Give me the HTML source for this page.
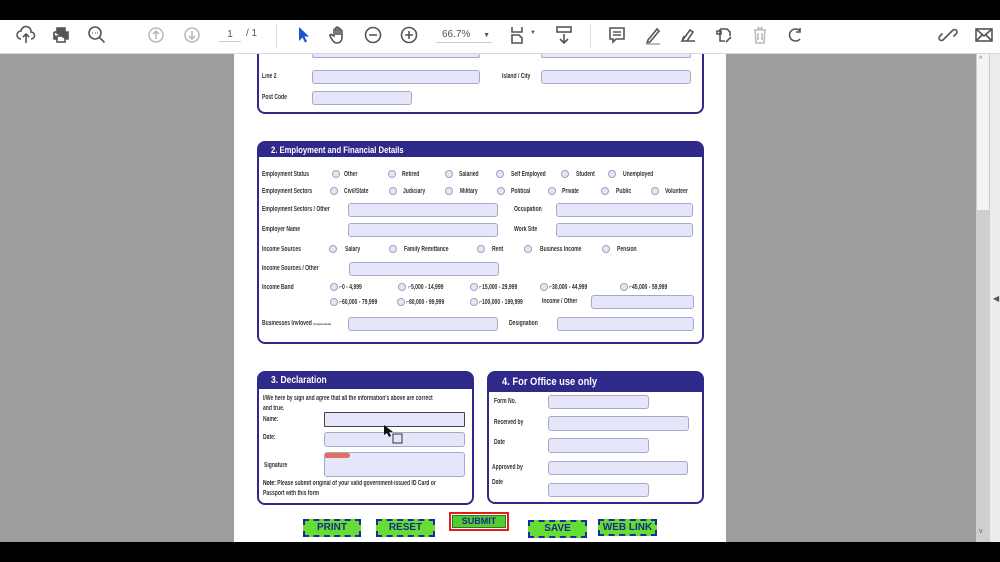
<!DOCTYPE html>
<html><head><meta charset="utf-8"><style>
*{margin:0;padding:0;box-sizing:border-box}
body{width:1000px;height:562px;overflow:hidden;background:#000;position:relative;font-family:"Liberation Sans",sans-serif}
.a{position:absolute}
#tb{left:0;top:20px;width:1000px;height:34px;background:#fff;border-bottom:1px solid #d8d8d8;z-index:9}
.tt{z-index:10}
#gray{left:0;top:54px;width:976px;height:488px;background:#9d9d9d}
#page{left:234px;top:54px;width:492px;height:488px;background:#fff}
#sb{left:976px;top:54px;width:14px;height:488px;background:#cfcfcf}
#rp{left:990px;top:54px;width:10px;height:488px;background:#ececec}
.box{position:absolute;border:2px solid #2f2a8a;border-radius:8px;background:#fff}
.hd{position:absolute;left:0;top:0;right:0;background:#2f2a8a;color:#fff;font-weight:bold;border-radius:5px 5px 0 0}
.hd span{display:inline-block;transform:scaleX(.85);transform-origin:left}
.l{position:absolute;font-size:7px;font-weight:bold;color:#333;white-space:nowrap;line-height:8px;transform:scaleX(.72);transform-origin:left}
.f{position:absolute;background:#e6e6fa;border:1px solid #a8a8c8;border-radius:3px}
.r{position:absolute;width:8px;height:8px;border-radius:50%;background:#e6e6f4;border:1px solid #a0a0c0}
.btn{position:absolute;background:#66dd33;border:2px dashed #1a2aa0;color:#1a2a8a;font-weight:bold;font-size:10px;text-align:center;line-height:13px}
svg.i{position:absolute;top:25px;width:20px;height:20px;fill:none;stroke:#555;stroke-width:1.6;z-index:10}
</style></head><body>
<div class="a" id="tb"></div>
<svg class="i" style="left:16px" viewBox="0 0 20 20"><path d="M5 14a4 4 0 0 1 0-8 5 5 0 0 1 10 1 3.5 3.5 0 0 1 0 7M10 18V9M7 12l3-3 3 3"/></svg>
<svg class="i" style="left:51px" viewBox="0 0 20 20"><path d="M6 7V3h8v4M3 7h14v7h-3M6 14H3V7" fill="#555"/><rect x="6" y="11" width="8" height="6"/></svg>
<svg class="i" style="left:87px" viewBox="0 0 20 20"><circle cx="8" cy="8" r="6"/><path d="M12.5 12.5l5 5"/><path d="M5.5 8h.5M8 8h.5M10.5 8h.5" stroke-width="2"/></svg>
<svg class="i" style="left:146px;stroke:#bbb" viewBox="0 0 20 20"><circle cx="10" cy="10" r="7"/><path d="M10 14V6M7 9l3-3 3 3"/></svg>
<svg class="i" style="left:182px;stroke:#bbb" viewBox="0 0 20 20"><circle cx="10" cy="10" r="7"/><path d="M10 6v8M7 11l3 3 3-3"/></svg>
<div class="a tt" style="left:219px;top:28px;width:22px;font-size:10px;color:#555;text-align:center;border-bottom:1px solid #ccc;line-height:13px">1</div>
<div class="a tt" style="left:246px;top:28px;font-size:10px;color:#555">/ 1</div>
<div class="a tt" style="left:276px;top:24px;width:1px;height:24px;background:#ddd"></div>
<svg class="i" style="left:293px;stroke:none;fill:#1a56c8" viewBox="0 0 20 20"><path d="M6 2v14l3.5-3.5 2.5 5 2-1-2.5-5H16z"/></svg>
<svg class="i" style="left:328px" viewBox="0 0 20 20"><path d="M6 11V5a1 1 0 0 1 2 0v5V3a1 1 0 0 1 2 0v7V4a1 1 0 0 1 2 0v6V6a1 1 0 0 1 2 0v6c0 4-2 6-5 6s-4-2-6-5l-1-2a1 1 0 0 1 2-1z"/></svg>
<svg class="i" style="left:363px" viewBox="0 0 20 20"><circle cx="10" cy="10" r="7.5"/><path d="M6 10h8"/></svg>
<svg class="i" style="left:399px" viewBox="0 0 20 20"><circle cx="10" cy="10" r="7.5"/><path d="M6 10h8M10 6v8"/></svg>
<div class="a tt" style="left:436px;top:28px;width:56px;font-size:10px;color:#555;border-bottom:1px solid #ccc;line-height:13px;padding-left:6px">66.7% <span style="margin-left:10px;font-size:7px">▼</span></div>
<svg class="i" style="left:508px" viewBox="0 0 20 20"><path d="M4 2v5h10V2M4 18v-8h7l3 3v5z"/></svg>
<div class="a tt" style="left:530px;top:30px;font-size:6px;color:#555">▼</div>
<svg class="i" style="left:554px" viewBox="0 0 20 20"><rect x="3" y="2" width="14" height="5"/><path d="M10 9v9M6 14l4 4 4-4"/></svg>
<div class="a tt" style="left:590px;top:24px;width:1px;height:24px;background:#ddd"></div>
<svg class="i" style="left:607px" viewBox="0 0 20 20"><path d="M3 3h14v11h-8l-3 3v-3H3z"/><path d="M6 7h8M6 10h8"/></svg>
<svg class="i" style="left:643px" viewBox="0 0 20 20"><path d="M5 15l9-11 2 2-9 11-3 1z"/><path d="M3 19h14" stroke="#aaa"/></svg>
<svg class="i" style="left:678px" viewBox="0 0 20 20"><path d="M4 16l8-11 3 2-6 9zM4 16l2-5M9 16h8"/></svg>
<svg class="i" style="left:714px" viewBox="0 0 20 20"><path d="M6 4h7l3 3v4M6 4v12h5M3 6h4v3H3z"/><path d="M12 17l5-5"/></svg>
<svg class="i" style="left:750px;stroke:#bbb" viewBox="0 0 20 20"><path d="M4 5h12M8 5V3h4v2M5 5l1 13h8l1-13M8 8v7M12 8v7"/></svg>
<svg class="i" style="left:785px" viewBox="0 0 20 20"><path d="M15 14a6 6 0 1 1 0-8M15 3v4h-4"/></svg>
<svg class="i" style="left:938px" viewBox="0 0 20 20"><path d="M8 12l-3 3a2.5 2.5 0 0 1-3.5-3.5l3-3M12 8l3-3a2.5 2.5 0 0 1 3.5 3.5l-3 3M7 13l6-6"/></svg>
<svg class="i" style="left:974px" viewBox="0 0 20 20"><rect x="2" y="4" width="16" height="12"/><path d="M2 4l8 7 8-7M2 16l6-6M18 16l-6-6"/></svg>

<div class="a" id="gray"></div>
<div class="a" id="page"></div>
<div class="a" id="sb"><div class="a" style="left:1px;top:0;width:12px;height:156px;background:#f4f4f4"></div><div class="a" style="left:3px;top:2px;font-size:7px;color:#666">^</div><div class="a" style="left:3px;top:474px;font-size:7px;color:#666">v</div></div>
<div class="a" id="rp"><div class="a" style="left:3px;top:240px;font-size:8px;color:#555">◀</div></div>

<!-- section 1 remnant -->
<div class="box" style="left:257px;top:54px;width:447px;height:60px;border-top:none;border-radius:0 0 8px 8px"></div>
<div class="f" style="left:312px;top:54px;width:168px;height:4px;border-top:none"></div>
<div class="f" style="left:541px;top:54px;width:150px;height:4px;border-top:none"></div>
<div class="l" style="left:262px;top:73px">Line 2</div>
<div class="f" style="left:312px;top:70px;width:168px;height:14px"></div>
<div class="l" style="left:502px;top:73px">Island / City</div>
<div class="f" style="left:541px;top:70px;width:150px;height:14px"></div>
<div class="l" style="left:262px;top:94px">Post Code</div>
<div class="f" style="left:312px;top:91px;width:100px;height:14px"></div>

<!-- section 2 -->
<div class="box" style="left:257px;top:141px;width:447px;height:203px"><div class="hd" style="height:14px;font-size:9px;line-height:14px;padding-left:12px"><span>2. Employment and Financial Details</span></div></div>
<div class="l" style="left:262px;top:171px">Employment Status</div>
<div class="r" style="left:332px;top:170px"></div><div class="l" style="left:344px;top:171px">Other</div>
<div class="r" style="left:388px;top:170px"></div><div class="l" style="left:402px;top:171px">Retired</div>
<div class="r" style="left:445px;top:170px"></div><div class="l" style="left:459px;top:171px">Salaried</div>
<div class="r" style="left:496px;top:170px"></div><div class="l" style="left:511px;top:171px">Self Employed</div>
<div class="r" style="left:561px;top:170px"></div><div class="l" style="left:576px;top:171px">Student</div>
<div class="r" style="left:608px;top:170px"></div><div class="l" style="left:623px;top:171px">Unemployed</div>

<div class="l" style="left:262px;top:188px">Employment Sectors</div>
<div class="r" style="left:330px;top:187px"></div><div class="l" style="left:344px;top:188px">Civil/State</div>
<div class="r" style="left:389px;top:187px"></div><div class="l" style="left:403px;top:188px">Judiciary</div>
<div class="r" style="left:445px;top:187px"></div><div class="l" style="left:460px;top:188px">Military</div>
<div class="r" style="left:497px;top:187px"></div><div class="l" style="left:511px;top:188px">Political</div>
<div class="r" style="left:548px;top:187px"></div><div class="l" style="left:562px;top:188px">Private</div>
<div class="r" style="left:601px;top:187px"></div><div class="l" style="left:616px;top:188px">Public</div>
<div class="r" style="left:651px;top:187px"></div><div class="l" style="left:665px;top:188px">Volunteer</div>

<div class="l" style="left:262px;top:206px">Employment Sectors / Other</div>
<div class="f" style="left:348px;top:203px;width:150px;height:14px"></div>
<div class="l" style="left:514px;top:206px">Occupation</div>
<div class="f" style="left:556px;top:203px;width:137px;height:14px"></div>
<div class="l" style="left:262px;top:226px">Employer Name</div>
<div class="f" style="left:348px;top:223px;width:150px;height:14px"></div>
<div class="l" style="left:514px;top:226px">Work Site</div>
<div class="f" style="left:556px;top:223px;width:137px;height:14px"></div>

<div class="l" style="left:262px;top:246px">Income Sources</div>
<div class="r" style="left:329px;top:245px"></div><div class="l" style="left:345px;top:246px">Salary</div>
<div class="r" style="left:389px;top:245px"></div><div class="l" style="left:404px;top:246px">Family Remittance</div>
<div class="r" style="left:477px;top:245px"></div><div class="l" style="left:492px;top:246px">Rent</div>
<div class="r" style="left:524px;top:245px"></div><div class="l" style="left:540px;top:246px">Business Income</div>
<div class="r" style="left:602px;top:245px"></div><div class="l" style="left:617px;top:246px">Pension</div>

<div class="l" style="left:262px;top:265px">Income Sources / Other</div>
<div class="f" style="left:349px;top:262px;width:150px;height:14px"></div>

<div class="l" style="left:262px;top:284px">Income Band</div>
<div class="r" style="left:330px;top:283px"></div><div class="l" style="left:339px;top:284px">⌐0 - 4,999</div>
<div class="r" style="left:398px;top:283px"></div><div class="l" style="left:408px;top:284px">⌐5,000 - 14,999</div>
<div class="r" style="left:470px;top:283px"></div><div class="l" style="left:479px;top:284px">⌐15,000 - 29,999</div>
<div class="r" style="left:540px;top:283px"></div><div class="l" style="left:549px;top:284px">⌐30,000 - 44,999</div>
<div class="r" style="left:620px;top:283px"></div><div class="l" style="left:629px;top:284px">⌐45,000 - 59,999</div>
<div class="r" style="left:330px;top:298px"></div><div class="l" style="left:339px;top:299px">⌐60,000 - 79,999</div>
<div class="r" style="left:397px;top:298px"></div><div class="l" style="left:406px;top:299px">⌐80,000 - 99,999</div>
<div class="r" style="left:470px;top:298px"></div><div class="l" style="left:479px;top:299px">⌐100,000 - 199,999</div>
<div class="l" style="left:542px;top:298px">Income / Other</div>
<div class="f" style="left:591px;top:295px;width:103px;height:14px"></div>

<div class="l" style="left:262px;top:320px">Businesses Invloved <span style="font-size:3px">(Company Name)</span></div>
<div class="f" style="left:348px;top:317px;width:150px;height:14px"></div>
<div class="l" style="left:509px;top:320px">Designation</div>
<div class="f" style="left:557px;top:317px;width:137px;height:14px"></div>

<!-- section 3 -->
<div class="box" style="left:257px;top:371px;width:217px;height:134px"><div class="hd" style="height:16px;font-size:10px;line-height:16px;padding-left:12px"><span>3. Declaration</span></div></div>
<div class="l" style="left:263px;top:395px">I/We here by sign and agree that all the information's above are correct</div>
<div class="l" style="left:263px;top:405px">and true.</div>
<div class="l" style="left:263px;top:416px">Name:</div>
<div class="f" style="left:324px;top:412px;width:141px;height:15px;border:1.5px solid #444;border-radius:1px"></div>
<div class="l" style="left:263px;top:434px">Date:</div>
<div class="f" style="left:324px;top:432px;width:141px;height:15px"></div>
<div class="l" style="left:264px;top:462px">Signature</div>
<div class="f" style="left:324px;top:452px;width:141px;height:25px"></div>
<div class="a" style="left:325px;top:453px;width:25px;height:5px;background:#e07060;border-radius:2px 4px 4px 2px"></div>
<div class="l" style="left:263px;top:480px"><b style="color:#111">Note:</b> Please submit original of your valid government-issued ID Card or</div>
<div class="l" style="left:263px;top:490px">Passport with this form</div>
<svg class="a" style="left:383px;top:424px" width="20" height="20" viewBox="0 0 20 20"><path d="M1 1v10l3-2 2 4 2-1-2-4h4z" fill="#111"/><rect x="10" y="10" width="9" height="9" fill="none" stroke="#333"/></svg>

<!-- section 4 -->
<div class="box" style="left:487px;top:371px;width:217px;height:133px"><div class="hd" style="height:19px;font-size:11px;line-height:19px;padding-left:13px"><span>4. For Office use only</span></div></div>
<div class="l" style="left:494px;top:398px">Form No.</div>
<div class="f" style="left:548px;top:395px;width:101px;height:14px"></div>
<div class="l" style="left:494px;top:419px">Received by</div>
<div class="f" style="left:548px;top:416px;width:141px;height:15px"></div>
<div class="l" style="left:494px;top:439px">Date</div>
<div class="f" style="left:548px;top:438px;width:101px;height:15px"></div>
<div class="l" style="left:492px;top:464px">Approved by</div>
<div class="f" style="left:548px;top:461px;width:140px;height:14px"></div>
<div class="l" style="left:492px;top:479px">Date</div>
<div class="f" style="left:548px;top:483px;width:101px;height:14px"></div>

<!-- buttons -->
<div class="btn" style="left:303px;top:519px;width:58px;height:18px">PRINT</div>
<div class="btn" style="left:376px;top:519px;width:59px;height:18px">RESET</div>
<div class="a" style="left:449px;top:512px;width:60px;height:19px;border:2px solid #e21b1b;background:#fff;padding:1px">
<div style="background:#55cc33;border:1px solid #2a7a1a;color:#1a2a8a;font:bold 9px 'Liberation Sans',sans-serif;text-align:center;line-height:11px;height:13px">SUBMIT</div></div>
<div class="btn" style="left:528px;top:520px;width:59px;height:18px">SAVE</div>
<div class="btn" style="left:598px;top:519px;width:59px;height:17px">WEB LINK</div>
</body></html>
